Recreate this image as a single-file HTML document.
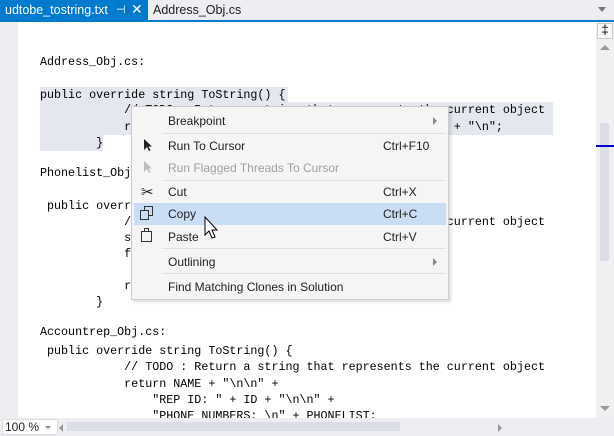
<!DOCTYPE html>
<html><head><style>
*{margin:0;padding:0;box-sizing:border-box}
body{width:614px;height:436px;overflow:hidden;background:#eeeef2;position:relative;font-family:"Liberation Sans",sans-serif}
.a{position:absolute}
.code{font-family:"Liberation Mono",monospace;font-size:11.7px;color:#000;white-space:pre;line-height:16px}
.m{font-size:12px;color:#1e1e1e;white-space:pre}
.sep{position:absolute;left:162px;width:284px;height:1px;background:#e0e0e0}
</style></head><body>
<!-- tabs -->
<div class="a" style="left:0;top:0;width:148px;height:21px;background:#007acc"></div>
<div class="a m" style="left:5px;top:3px;color:#fff;font-size:12.5px">udtobe_tostring.txt</div>
<div class="a m" style="left:116px;top:3px;color:#fff;font-size:11px">⊣</div>
<div class="a m" style="left:131px;top:1px;color:#fff;font-size:14px">✕</div>
<div class="a m" style="left:153px;top:3px;font-size:12.5px">Address_Obj.cs</div>
<div class="a" style="left:598px;top:7px;border:4px solid transparent;border-top:5px solid #777"></div>
<div class="a" style="left:0;top:20px;width:614px;height:2px;background:#007acc"></div>
<!-- editor -->
<div class="a" style="left:18px;top:22px;width:578px;height:396px;background:#fff"></div>
<!-- selection -->
<div class="a" style="left:40px;top:87px;width:248px;height:16px;background:#e4e7ee"></div>
<div class="a" style="left:40px;top:102px;width:513px;height:33px;background:#e4e7ee"></div>
<div class="a" style="left:40px;top:135px;width:63px;height:16px;background:#e4e7ee"></div>
<div class="a code" style="left:40px;top:54px">Address_Obj.cs:</div>
<div class="a code" style="left:40px;top:87px">public override string ToString() {</div>
<div class="a code" style="left:40px;top:102px">            // TODO : Return a string that represents the current object</div>
<div class="a code" style="left:40px;top:119px">            return NAME + "\n\n" + ADDRESS + "\n\n" + CITY + "\n";</div>
<div class="a code" style="left:40px;top:135px">        }</div>
<div class="a code" style="left:40px;top:165px">Phonelist_Obj.cs:</div>
<div class="a code" style="left:40px;top:198px"> public override string ToString() {</div>
<div class="a code" style="left:40px;top:214px">            // TODO : Return a string that represents the current object</div>
<div class="a code" style="left:40px;top:230px">            string s = "";</div>
<div class="a code" style="left:40px;top:246px">            foreach (var x in list)</div>
<div class="a code" style="left:40px;top:278px">            return s;</div>
<div class="a code" style="left:40px;top:294px">        }</div>
<div class="a code" style="left:40px;top:324px">Accountrep_Obj.cs:</div>
<div class="a code" style="left:40px;top:343px"> public override string ToString() {</div>
<div class="a code" style="left:40px;top:359px">            // TODO : Return a string that represents the current object</div>
<div class="a code" style="left:40px;top:376px">            return NAME + "\n\n" +</div>
<div class="a code" style="left:40px;top:392px">                "REP ID: " + ID + "\n\n" +</div>
<div class="a code" style="left:40px;top:408px">                "PHONE NUMBERS: \n" + PHONELIST:</div>
<!-- right scrollbar -->
<div class="a" style="left:596px;top:22px;width:18px;height:396px;background:#f0f0f2"></div>
<div class="a" style="left:597px;top:23px;width:16px;height:16px;border:1px solid #ccc;background:#f6f6f6;font-size:13px;text-align:center;line-height:12px">‡</div>
<div class="a" style="left:600px;top:45px;border:5px solid transparent;border-bottom:5px solid #999;border-top:0"></div>
<div class="a" style="left:600px;top:123px;width:9px;height:138px;background:#dcdee6"></div>
<div class="a" style="left:596px;top:145px;width:18px;height:2px;background:#0000cc"></div>
<div class="a" style="left:600px;top:406px;border:5px solid transparent;border-top:5px solid #999;border-bottom:0"></div>
<!-- bottom bar -->
<div class="a" style="left:0;top:418px;width:614px;height:18px;background:#eeeef2"></div>
<div class="a" style="left:2px;top:419px;width:56px;height:16px;background:#fff;border:1px solid #ddd"></div>
<div class="a m" style="left:5px;top:420px;font-size:12px">100 %</div>
<div class="a" style="left:45px;top:426px;border:3px solid transparent;border-top:3px solid #888"></div>
<div class="a" style="left:59px;top:424px;border:4px solid transparent;border-right:4px solid #999;border-left:0"></div>
<div class="a" style="left:67px;top:422px;width:333px;height:9px;background:#dcdee6"></div>
<div class="a" style="left:498px;top:424px;border:4px solid transparent;border-left:4px solid #999;border-right:0"></div>
<!-- context menu -->
<div class="a" style="left:131px;top:106px;width:318px;height:194px;background:#f5f5f5;border:1px solid #ccc;box-shadow:2px 2px 3px rgba(0,0,0,.15)"></div>
<div class="a" style="left:134px;top:203px;width:312px;height:22px;background:#c9def5"></div>
<div class="a m" style="left:168px;top:114px">Breakpoint</div>
<div class="a" style="left:433px;top:117px;border:4px solid transparent;border-left:4px solid #888;border-right:0"></div>
<div class="sep" style="top:133px"></div>
<svg class="a" style="left:143px;top:139px" width="10" height="13" viewBox="0 0 10 13"><path d="M1 0 L1 11 L4 8 L6 12 L7.5 11.3 L5.5 7.5 L9 7.5 Z" fill="#222"/></svg>
<div class="a m" style="left:168px;top:139px">Run To Cursor</div>
<div class="a m" style="left:383px;top:139px">Ctrl+F10</div>
<svg class="a" style="left:143px;top:161px" width="10" height="13" viewBox="0 0 10 13"><path d="M1 0 L1 11 L4 8 L6 12 L7.5 11.3 L5.5 7.5 L9 7.5 Z" fill="#bbb"/></svg>
<div class="a m" style="left:168px;top:161px;color:#a0a0a0">Run Flagged Threads To Cursor</div>
<div class="sep" style="top:180px"></div>
<div class="a m" style="left:141px;top:183px;font-size:15px">✂</div>
<div class="a m" style="left:168px;top:185px">Cut</div>
<div class="a m" style="left:383px;top:185px">Ctrl+X</div>
<div class="a" style="left:144px;top:206px;width:9px;height:10px;border:1px solid #333"></div>
<div class="a" style="left:140px;top:210px;width:9px;height:10px;border:1px solid #333;background:#c9def5"></div>
<div class="a m" style="left:168px;top:207px">Copy</div>
<div class="a m" style="left:383px;top:207px">Ctrl+C</div>
<div class="a" style="left:141px;top:231px;width:11px;height:11px;border:1px solid #333"></div>
<div class="a" style="left:144px;top:228px;width:5px;height:4px;border:1px solid #333;background:#f5f5f5"></div>
<div class="a m" style="left:168px;top:230px">Paste</div>
<div class="a m" style="left:383px;top:230px">Ctrl+V</div>
<div class="sep" style="top:248px"></div>
<div class="a m" style="left:168px;top:255px">Outlining</div>
<div class="a" style="left:433px;top:258px;border:4px solid transparent;border-left:4px solid #888;border-right:0"></div>
<div class="sep" style="top:273px"></div>
<div class="a m" style="left:168px;top:280px">Find Matching Clones in Solution</div>
<!-- cursor -->
<svg class="a" style="left:204px;top:216px" width="16" height="24" viewBox="0 0 16 24"><path d="M1 1 L1 19 L5 15 L8 22 L11 21 L8 14 L13 14 Z" fill="#fff" stroke="#000" stroke-width="1"/></svg>
</body></html>
